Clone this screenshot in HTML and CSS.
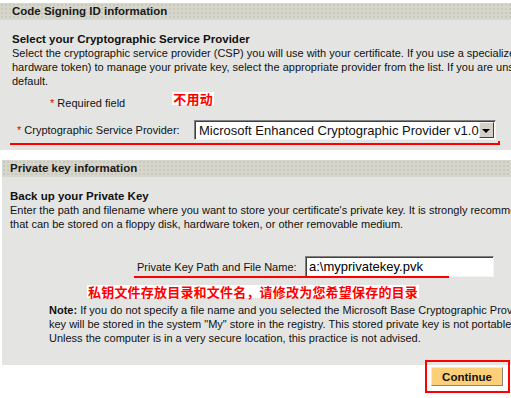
FILE: index.html
```html
<!DOCTYPE html>
<html lang="en">
<head>
    <meta charset="UTF-8">
    <meta name="viewport" content="width=device-width, initial-scale=1.0">
    <title>Code Signing ID information</title>
    <link rel="stylesheet" href="styles.css">
</head>
<body>

    <div class="page">
        <div class="section">
            <div class="section-head">Code Signing ID information</div>
            <div class="section-body">
                <h4>Select your Cryptographic Service Provider</h4>
                <p>Select the cryptographic service provider (CSP) you will use with your certificate. If you use a specialized<br>hardware token) to manage your private key, select the appropriate provider from the list. If you are unsure,<br>default.</p>

                <div class="required"><span class="star">*</span> Required field <span class="cn cn-keep">不用动</span></div>

                <div class="csp-row">
                    <label><span class="star">*</span> Cryptographic Service Provider:</label>
                    <div class="select-box">
                        <span class="select-text">Microsoft Enhanced Cryptographic Provider v1.0</span>
                        <span class="drop-btn"><span class="arrow"></span></span>
                    </div>
                </div>
                <div class="mark-line csp-line"></div>
            </div>
        </div>

        <div class="section section-key">
            <div class="section-head">Private key information</div>
            <div class="section-body">
                <h4>Back up your Private Key</h4>
                <p>Enter the path and filename where you want to store your certificate's private key. It is strongly recommended<br>that can be stored on a floppy disk, hardware token, or other removable medium.</p>

                <div class="key-row">
                    <label for="keyPath">Private Key Path and File Name:</label>
                    <input type="text" id="keyPath" value="a:\myprivatekey.pvk">
                </div>
                <div class="mark-line key-line"></div>

                <div class="cn-row"><span class="cn">私钥文件存放目录和文件名，请修改为您希望保存的目录</span></div>

                <p class="note"><b>Note:</b> If you do not specify a file name and you selected the Microsoft Base Cryptographic Provider,<br>key will be stored in the system "My" store in the registry. This stored private key is not portable.<br>Unless the computer is in a very secure location, this practice is not advised.</p>
            </div>
        </div>

        <div class="footer">
            <div class="mark-box">
                <button class="continue-btn">Continue</button>
            </div>
        </div>
    </div>

</body>
</html>
```

FILE: styles.css
```css
body {
    margin: 0;
    font-family: "Liberation Sans", Arial, sans-serif;
    font-size: 11px;
    color: #111;
    background: #fff;
    overflow: hidden;
}
.page {
    width: 511px;
    padding-top: 3px;
    overflow: hidden;
}
.section {
    background: #e4e5e2;
}
.section-head {
    height: 17px;
    line-height: 17px;
    padding-left: 12px;
    font-size: 11.5px;
    font-weight: bold;
    color: #1a1a1a;
    background-color: #d6d6cd;
    background-image: radial-gradient(circle, #c8c8bc 0.7px, transparent 0.9px);
    background-size: 4px 4px;
}
.section-body {
    padding: 12px 0 5px 12px;
}
h4 {
    margin: 0;
    font-size: 11.5px;
    line-height: 14px;
}
p {
    margin: 0;
    line-height: 14px;
    white-space: nowrap;
}
.star {
    color: #e00000;
}
.required {
    height: 14px;
    margin-top: 8px;
    padding-left: 38px;
    line-height: 14px;
}
.cn {
    display: inline-block;
    padding: 0 1px;
    font-family: "Noto Sans CJK SC", sans-serif;
    font-size: 13px;
    font-weight: bold;
    line-height: 13px;
    letter-spacing: 0.2px;
    color: #ff0000;
    background: #fff;
}
.cn-keep {
    margin-left: 44px;
    margin-top: -4px;
    vertical-align: top;
}
.csp-row {
    display: flex;
    align-items: center;
    height: 20px;
    margin-top: 10px;
}
.csp-row label {
    box-sizing: border-box;
    width: 182px;
    padding-left: 5px;
}
.select-box {
    box-sizing: border-box;
    display: flex;
    align-items: center;
    width: 302px;
    height: 20px;
    border: 1px solid;
    border-color: #808080 #f4f4f4 #f4f4f4 #808080;
    box-shadow: inset 1px 1px #404040;
    background: #fff;
    font-size: 13px;
}
.select-text {
    padding-left: 4px;
    white-space: nowrap;
}
.drop-btn {
    box-sizing: border-box;
    display: flex;
    align-items: center;
    justify-content: center;
    width: 16px;
    height: 16px;
    margin-left: auto;
    margin-right: 1px;
    border: 1px solid;
    border-color: #f4f4f4 #404040 #404040 #f4f4f4;
    background: #d4d0c8;
}
.arrow {
    width: 0;
    height: 0;
    border-left: 4px solid transparent;
    border-right: 4px solid transparent;
    border-top: 4px solid #000;
    margin-top: 1px;
}
.mark-line {
    height: 2px;
    background: #ff0000;
}
.csp-line {
    margin: 3px 0 0 -2px;
    width: 490px;
    position: relative;
}
.csp-line::after {
    content: "";
    position: absolute;
    right: 0;
    top: -2px;
    width: 2px;
    height: 2px;
    background: #ff0000;
}
.section-key {
    margin-top: 10px;
    margin-left: 2px;
}
.section-key .section-head {
    padding-left: 8px;
}
.section-key .section-body {
    padding: 12px 0 20px 8px;
}
.key-row {
    display: flex;
    align-items: center;
    height: 21px;
    margin-top: 25px;
    margin-left: 127px;
}
.key-row label {
    width: 168px;
}
.key-row input {
    box-sizing: border-box;
    width: 189px;
    height: 21px;
    margin: 0;
    padding: 0 3px;
    border: 1px solid;
    border-color: #808080 #f4f4f4 #f4f4f4 #808080;
    box-shadow: inset 1px 1px #404040;
    font-family: "Liberation Sans", Arial, sans-serif;
    font-size: 13px;
    color: #000;
    background: #fff;
}
.key-line {
    width: 315px;
    margin: -1px 0 0 124px;
    position: relative;
}
.cn-row {
    margin-top: 7px;
    margin-left: 77px;
    height: 14px;
}
.note {
    margin-top: 4px;
    margin-left: 39px;
}
.footer {
    display: flex;
    justify-content: flex-end;
    margin-top: -5px;
    padding-right: 1px;
}
.mark-box {
    box-sizing: border-box;
    width: 85px;
    height: 33px;
    padding: 5px 0 0 4px;
    border: 2px solid #ff0000;
}
.continue-btn {
    width: 72px;
    height: 19px;
    padding: 0;
    border: 1px solid;
    border-color: #ffe9b5 #8c8473 #8c8473 #ffe9b5;
    background: #fccf78;
    font-family: "Liberation Sans", Arial, sans-serif;
    font-size: 11.5px;
    font-weight: bold;
    color: #111;
    cursor: pointer;
}
```
